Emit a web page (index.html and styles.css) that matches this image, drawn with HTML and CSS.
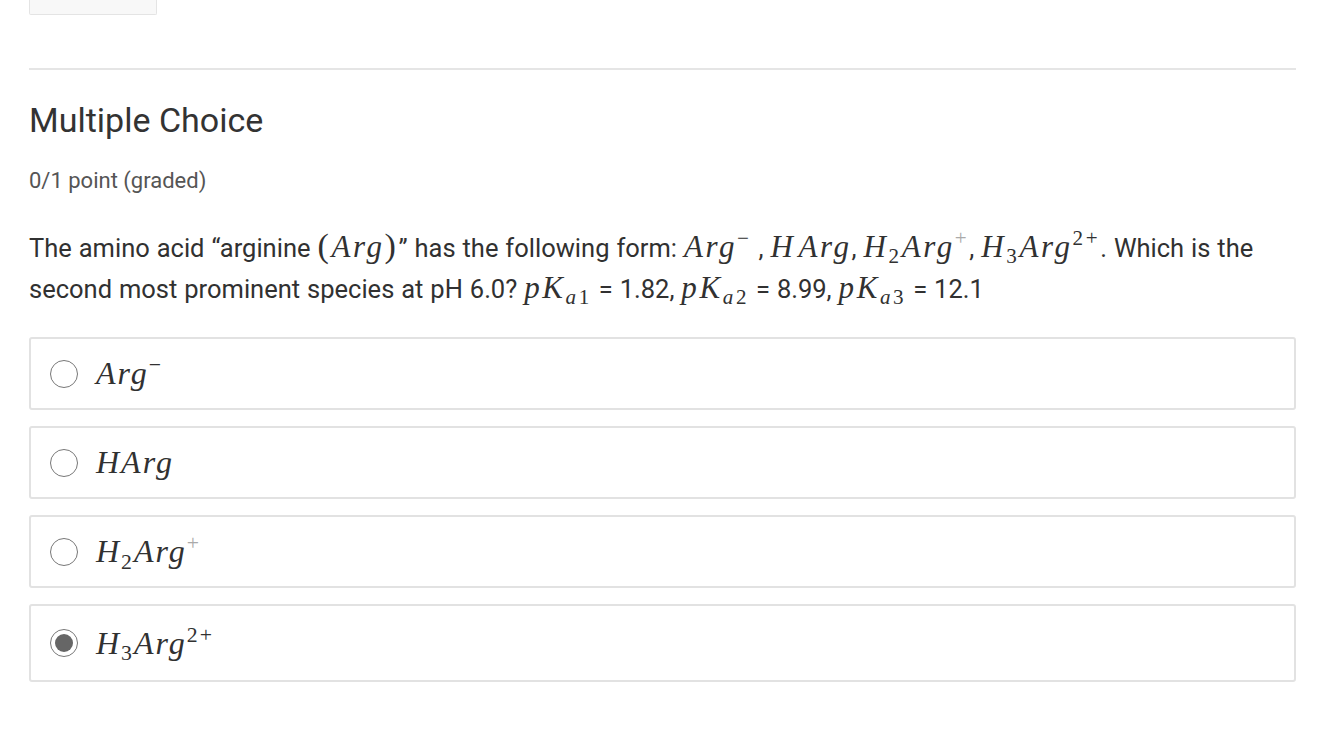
FILE: index.html
```html
<!DOCTYPE html>
<html lang="en">
<head>
  <meta charset="UTF-8" />
  <title>Multiple Choice</title>
  <link rel="stylesheet" href="styles.css">
</head>
<body>

  <div class="problem">
    <div class="top-bar">
      <button class="top-btn"></button>
    </div>

    <hr class="divider" />

    <h3 class="title">Multiple Choice</h3>
    <p class="score">0/1 point (graded)</p>

    <!-- Enunciado -->
    <p class="question">
      The amino acid “arginine <span class="math"><span class="paren">(</span><i>Arg</i><span class="paren">)</span></span>” has the following form:
      <span class="math"><i>Arg</i><sup>−</sup></span> , <span class="math"><i class="h">H</i><i>Arg</i></span>, <span class="math"><i>H</i><sub>2</sub><i>Arg</i><sup class="faint">+</sup></span>, <span class="math"><i>H</i><sub>3</sub><i>Arg</i><sup>2+</sup></span>. Which is the
      second most prominent species at pH 6.0? <span class="math"><i>pK</i><sub><i>a</i>1</sub></span> = 1.82, <span class="math"><i>pK</i><sub><i>a</i>2</sub></span> = 8.99, <span class="math"><i>pK</i><sub><i>a</i>3</sub></span> = 12.1
    </p>

    <!-- Opciones -->
    <div class="choices">
      <label class="choice">
        <span class="radio"></span>
        <span class="math big"><i>Arg</i><sup>−</sup></span>
      </label>
      <label class="choice">
        <span class="radio"></span>
        <span class="math big"><i>H</i><i>Arg</i></span>
      </label>
      <label class="choice">
        <span class="radio"></span>
        <span class="math big"><i>H</i><sub>2</sub><i>Arg</i><sup class="faint">+</sup></span>
      </label>
      <label class="choice tall">
        <span class="radio checked"></span>
        <span class="math big"><i>H</i><sub>3</sub><i>Arg</i><sup>2+</sup></span>
      </label>
    </div>
  </div>

</body>
</html>
```

FILE: styles.css
```css
:root {
  --text: #313131;
  --muted: #555;
  --border: #e2e2e2;
}

* {
  box-sizing: border-box;
}

body {
  margin: 0;
  font-family: Roboto, 'Liberation Sans', sans-serif;
  color: var(--text);
  background: #fff;
}

.problem {
  padding: 0 22px 0 29px;
}

.top-bar {
  display: flex;
  height: 15px;
}

.top-btn {
  width: 128px;
  height: 15px;
  padding: 0;
  background: #f8f8f8;
  border: 1px solid #e4e4e4;
  border-top: none;
  border-radius: 0 0 2px 2px;
}

.divider {
  margin: 53px 0 0;
  border: none;
  border-top: 2px solid #e5e5e5;
}

.title {
  margin: 30px 0 0;
  font-size: 34px;
  font-weight: 400;
  line-height: 40px;
  color: #333;
}

.score {
  margin: 28px 0 0;
  font-size: 22px;
  line-height: 26px;
  color: var(--muted);
}

.question {
  margin: 32px 0 0;
  font-size: 25.5px;
  line-height: 40px;
  word-spacing: 0.6px;
}

.math {
  font-family: 'Liberation Serif', 'Times New Roman', serif;
  font-size: 31px;
  letter-spacing: 2.6px;
  white-space: nowrap;
}

.math i {
  font-style: italic;
}

.math .h {
  margin-right: 3px;
}

.math sub,
.math sup {
  font-size: 0.68em;
  line-height: 0;
  vertical-align: baseline;
  position: relative;
}

.math sub {
  top: 0.3em;
}

.math sup {
  top: -0.55em;
}

.paren {
  font-size: 1.1em;
}

.faint {
  color: #aaa;
}

.choices {
  display: flex;
  flex-direction: column;
  gap: 16px;
  margin-top: 28px;
}

.choice {
  display: flex;
  align-items: center;
  gap: 18px;
  height: 73px;
  padding: 0 19px;
  border: 2px solid var(--border);
  border-radius: 3px;
}

.choice.tall {
  height: 78px;
}

.radio {
  width: 28px;
  height: 28px;
  border: 1.5px solid #777;
  border-radius: 50%;
  flex-shrink: 0;
  position: relative;
}

.radio.checked::after {
  content: "";
  position: absolute;
  top: 4px;
  left: 4px;
  right: 4px;
  bottom: 4px;
  border-radius: 50%;
  background: #666;
}

.math.big {
  font-size: 32px;
  letter-spacing: 2px;
}
```
